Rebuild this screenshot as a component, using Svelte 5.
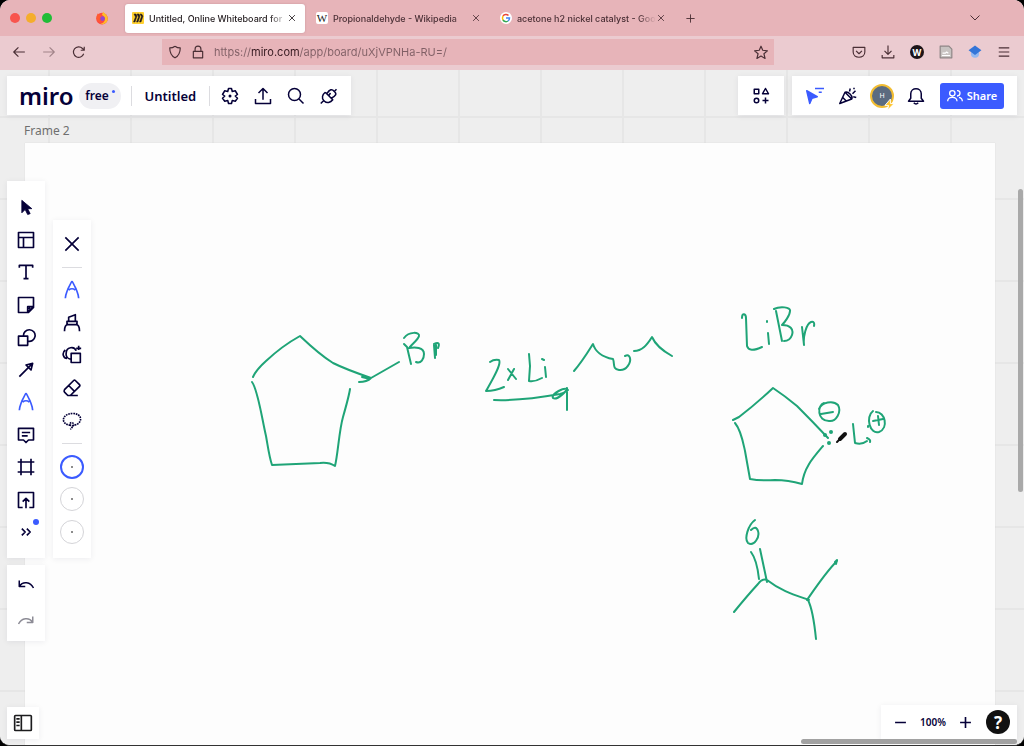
<script lang="ts">
	let activeTool = $state('Pen');
	let activeColor = $state(0);
	let url = $state('https://miro.com/app/board/uXjVPNHa-RU=/');

	const tools = [
		{ name: 'Select', d: 'M7 4v15l4-4 3 6 3-1-3-6h5z', fill: true },
		{ name: 'Templates', d: 'M3 3h18v18H3zM3 9h18M9 9v12' },
		{ name: 'Text', d: 'M4 7V4h16v3M12 4v16M9 20h6' },
		{ name: 'Sticky note', d: 'M3 3h18v12l-6 6H3zM21 14h-7v7zM20 15l-5 5M17 15l-2 2' },
		{ name: 'Shapes', d: 'M3 11h11v11H3zM9 11a7 7 0 1 1 5 6' },
		{ name: 'Connection line', d: 'M4 20 19 5M12 6l8-2-2 8z' },
		{ name: 'Pen', d: 'M4 22c0-4 2-8 3-11l4-8q1-2 2 0l4 8c1 3 3 7 3 11M8 12q4-3 8 0' },
		{ name: 'Comment', d: 'M3 4h18v14h-6l-3 3-3-3H3zM7 9h10M7 13h7' },
		{ name: 'Frame', d: 'M6 2v20M18 2v20M2 6h20M2 18h20' },
		{ name: 'Upload', d: 'M8 21H3V3h18v18h-5M12 22V10M8 14l4-4 4 4' },
		{ name: 'More', d: 'm7 8 4 4-4 4M13 8l4 4-4 4' }
	];

	const penTools = [
		{ name: 'Pen', d: 'M4 22c0-4 2-8 3-11l4-8q1-2 2 0l4 8c1 3 3 7 3 11M8 12q4-3 8 0' },
		{ name: 'Highlighter', d: 'M3 22c0-4 1-8 4-8h10c3 0 4 4 4 8M6 14v-4h12v4M8 10V5l8-3v8' },
		{ name: 'Smart drawing', d: 'M11 10h11v11H11zM10 17a6 6 0 0 1-5-7c0-8 10-9 12-3M4 6c-5 4-2 10 2 10M20 1v5M17 4h6' },
		{ name: 'Eraser', d: 'M3 14 14 3q1-1 2 0l5 5q1 1 0 2L10 21H7l-4-4q-1-1 0-3M8 9l7 7M10 21h9' },
		{ name: 'Lasso', d: 'M10 17c-12-1-11-14 3-14 12 0 12 12 2 14q-3 1-5 0c-2-4 5-4 4 0q-2 3-4 5', dashed: true }
	];

	const strokes = [
		// bromide on the left
		'M253 377q3-7 13-16 16-15 34-25 20 19 33 27 12 6 38 15 M359 382q8 0 12-4l28-16 M362 377l8 2',
		'M252 382c6 8 10 37 14 54 2 11 3 20 6 29l48-2q9-1 15 3c3-12 4-35 8-49q6-21 7-28',
		'M404 344l3 3 4 17 M404 338c5-7 16-6 15-2-1 4-7 8-10 12 6-1 15-1 15 6 0 5-3 10-8 8 M434 345l1 13 M434 344q7-3 4 4 M436 345v10',
		// reagent above the arrow
		'M490 362q4-3 9-2c3 4-8 22-13 31q9 0 18-4 M508 369l8 10 M514 369l-6 11 M529 354l1 12-1 15q6 1 13-3 M542 359l2 1 M545 367l1 10',
		'M494 400c25 1 49-3 66-6q4-1 8-4c-3-4-17 4-15 8 4 3 15-8 14-10v22',
		'M574 371c8-9 14-19 19-27 2 7 9 13 20 15 2 5-1 10 6 11 8 1 12-8 11-12q-1-4-5-2 M634 351c8 0 13-6 18-14 3 7 11 14 20 19',
		// lithium bromide
		'M742 318c0-6 4-4 4 0l1 28q2 7 15 1 M767 322v-1 M768 333l1 11 M776 311l6 30 M774 309c6-3 17-2 16 2 0 4-5 11-8 14 8 0 12 4 10 10q-2 6-8 6 M802 327l2 18c-1-8 2-21 7-23q4-1 3 4',
		// organolithium ring
		'M733 420l6-3q17-13 34-29 12 8 24 18 16 16 31 32 M735 423c6 7 8 19 10 28l5 28q10 2 25 1 13 0 27 4c2-16 10-25 21-38',
		'M819 409c3-7 14-9 19-4 4 7-2 17-9 16-12 0-12-16-5-18 M821 414l12-2',
		'M853 424l2 19q7 2 12-2 M868 427v-1 M867 438q4 2 3 4 M873 411c-8 6-3 24 6 21 10-4 6-20-3-20 M873 421l10-2 M878 416l1 9',
		// ketone
		'M755 520c-7 5-11 19-7 23 6 4 12-6 10-12q-2-6-7-1 M751 552q6 8 8 27 M760 549l7 33 M734 612q13-16 24-28 4-6 9-4c14 11 28 15 42 20 M807 600c9-13 19-28 30-39 M808 600c5 10 7 29 8 39 M835 562l2-2-1 4'
	];
</script>

{#snippet icon(d: string, filled = false, dashed = false)}
	<svg class="icon" class:filled class:dashed viewBox="0 0 24 24" aria-hidden="true"><path {d} /></svg>
{/snippet}

<div class="window">
	<header class="browser">
		<div class="tabs">
			<div class="lights"><i class="red"></i><i class="amber"></i><i class="green"></i></div>
			<svg class="firefox" viewBox="0 0 24 24" aria-hidden="true">
				<circle cx="12" cy="13" r="10" fill="#ff4b3e" />
				<path d="M14 1c1 3 8 5 8 13a10 10 0 0 1-13 8c9-1 11-11 3-15z" fill="#ffbd28" />
				<path d="M3 8 5 4q1 3 4 3l3 3c-5 0-6 7-1 9-7 0-9-5-8-11" fill="#ff5a32" />
				<circle cx="13" cy="13" r="4" fill="#9149cf" />
			</svg>
			<div class="tab active">
				<svg class="favicon" viewBox="0 0 24 24" aria-hidden="true">
					<rect width="24" height="24" rx="2" fill="#ffd02f" />
					<path d="M4 4h4l2 4-4 12H3l4-10zm6 0h4l2 4-4 12H9l4-10zm6 0h3l3 4-4 12h-3l4-11z" fill="#211a1e" stroke="#211a1e" />
				</svg>
				<span>Untitled, Online Whiteboard for</span>
				<button aria-label="Close tab">{@render icon('m5 5 14 14M19 5 5 19')}</button>
			</div>
			<div class="tab">
				<span class="favicon wiki">W</span>
				<span>Propionaldehyde - Wikipedia</span>
				<button aria-label="Close tab">{@render icon('m5 5 14 14M19 5 5 19')}</button>
			</div>
			<div class="tab">
				<svg class="favicon" viewBox="0 0 24 24" aria-hidden="true">
					<circle cx="12" cy="12" r="12" fill="#fff" />
					<g fill="none" stroke-width="3">
						<path d="M6 8a7 7 0 0 1 11-1" stroke="#ea4335" />
						<path d="M6 8a8 8 0 0 0 0 8" stroke="#fbbc05" />
						<path d="M6 16a7 7 0 0 0 10 2" stroke="#34a853" />
						<path d="M16 18q3-2 3-6h-7" stroke="#4285f4" />
					</g>
				</svg>
				<span>acetone h2 nickel catalyst - Goo</span>
				<button aria-label="Close tab">{@render icon('m5 5 14 14M19 5 5 19')}</button>
			</div>
			<button class="new-tab" aria-label="New tab">{@render icon('M12 3v18M3 12h18')}</button>
			<button class="list-tabs" aria-label="List all tabs">{@render icon('m3 7 9 9 9-9')}</button>
		</div>

		<div class="navbar">
			<div class="history">
				<button aria-label="Back">{@render icon('M22 12H3M11 4l-8 8 8 8')}</button>
				<button aria-label="Forward" disabled>{@render icon('M2 12h19M13 4l8 8-8 8')}</button>
				<button aria-label="Reload">{@render icon('M20 15a9 9 0 1 1-2-9l3 3M21 3v6h-6')}</button>
			</div>
			<div class="urlbar">
				{@render icon('M12 2q4 3 9 3c0 8-2 13-9 17C5 18 3 13 3 5q5 0 9-3')}
				{@render icon('M4 11h16v11H4zM7 11V7q0-5 5-5t5 5v4')}
				<div class="address">
					<input aria-label="Address" bind:value={url} />
				</div>
				<button aria-label="Bookmark">{@render icon('m12 2 3 7 8 1-6 5 2 8-7-4-7 4 2-8-6-5 8-1z')}</button>
			</div>
			<div class="extensions">
				<button aria-label="Pocket">{@render icon('M2 4h20v8c0 12-20 12-20 0zM7 10l5 5 5-5')}</button>
				<button aria-label="Downloads">{@render icon('M12 1v15M6 10l6 6 6-6M2 17v5h20v-5')}</button>
				<button class="w-badge" aria-label="Wiki extension">W</button>
				<button aria-label="Page extension">
					<svg class="icon" viewBox="0 0 24 24"><path d="M2 2h15l5 5v15H2z" fill="#c8c3c1" stroke="#8d8585" /><path d="M5 18h14M6 14h5l2-2 3 2" stroke="#fff" /></svg>
				</button>
				<button aria-label="Scholar extension">
					<svg class="icon" viewBox="0 0 24 24"><circle cx="12" cy="15" r="7" fill="#94b9f1" stroke="none" /><path d="m1 9 11-8 11 8-11 8z" fill="#3475d8" stroke="none" /></svg>
				</button>
				<button aria-label="Application menu">{@render icon('M3 5h18M3 12h18M3 19h18')}</button>
			</div>
		</div>
	</header>

	<main class="board">
		<span class="frame-label">Frame 2</span>
		<div class="frame">
			<svg class="ink" viewBox="25 143 970 602" aria-label="Reaction sketch">
				{#each strokes as d}
					<path {d} />
				{/each}
				<g class="dots"><circle cx="831" cy="432" r="2" /><circle cx="829" cy="443" r="2" /><circle cx="825" cy="435" r="2" /></g>
				<path class="nib" d="m840 439 5-5" />
				<path class="nib tip" d="m837 442 4-4" />
			</svg>
		</div>
		<div class="scroll-y"></div>
		<div class="scroll-x"></div>

		<div class="overlay">
			<div class="topbar">
				<div class="panel title-panel">
					<a class="logo" href="#boards">miro</a>
					<button class="plan">free<i></i></button>
					<hr />
					<button class="title">Untitled</button>
					<hr />
					<div class="board-actions">
						<button aria-label="Settings">
							<svg class="icon" viewBox="0 0 24 24"><path d="m10 2-1 4-4-1-3 5 3 2-3 3 3 4 4-1 1 4h4l1-4 4 1 3-4-3-3 3-2-3-5-4 1-1-4z" /><circle cx="12" cy="12" r="1" /></svg>
						</button>
						<button aria-label="Export">{@render icon('M12 17V3M6 8l6-6 6 6M2 16v6h20v-6')}</button>
						<button aria-label="Search">{@render icon('M18 10a8 8 0 1 1-16 0 8 8 0 0 1 16 0M16 16l6 6')}</button>
						<button aria-label="Apps">{@render icon('m7 7 10 10c-3 4-8 5-11 2l-1-1C2 15 3 10 7 7M5 18l-4 4M9 9c4-6 7-7 10-3M15 15c6-3 8-6 4-9M12 11l2-3M19 6l3-3')}</button>
					</div>
				</div>
				<div class="panel apps-panel">
					<button aria-label="Widgets">{@render icon('M3 3h6v6H3zM18 2l4 7h-8zM6 15a3 3 0 1 1 0 6 3 3 0 0 1 0-6M18 14v8M14 18h8')}</button>
				</div>
				<div class="panel people-panel">
					<button class="blue" aria-label="Hide cursors">
						<svg class="icon" viewBox="0 0 24 24"><path d="m1 5 14 8-7 2-3 7z" fill="currentColor" /><path d="M12 2h12M17 7h4" /></svg>
					</button>
					<button aria-label="Reactions">{@render icon('m8 7 9 9-16 6zM8 7c4-2 11 5 9 9M5 14l5 5M14 6l1-4M18 9l4-4M19 13l4 1M20 1v2')}</button>
					<button class="avatar" aria-label="Account">
						<span>H</span>
						<svg viewBox="0 0 12 12"><path d="M7 0 1 7h4L4 12l7-7H7z" /></svg>
					</button>
					<button aria-label="Notifications">{@render icon('M2 19h20l-3-4V9C19 0 5 0 5 9v6zM9 21q3 3 6 0')}</button>
					<button class="share">
						{@render icon('M12 8a4 4 0 1 1-8 0 4 4 0 0 1 8 0M1 20c0-8 14-8 14 0M15 4c6-1 6 8 0 8M18 14q5 1 5 6')}
						Share
					</button>
				</div>
			</div>

			<div class="rails">
				<div class="rail-column">
					<div class="panel rail tools">
						{#each tools as tool}
							<button
								class:blue={activeTool === tool.name}
								class:more={tool.name === 'More'}
								aria-label={tool.name}
								onclick={() => (activeTool = tool.name)}
							>
								{@render icon(tool.d, tool.fill)}
							</button>
						{/each}
					</div>
					<div class="panel rail undo">
						<button aria-label="Undo">{@render icon('M3 6v8h8M3 14c5-8 15-6 19 2')}</button>
						<button aria-label="Redo" disabled>{@render icon('M21 6v8h-8M21 14c-5-8-15-6-19 2')}</button>
					</div>
				</div>
				<div class="panel rail pens">
					<button aria-label="Close">{@render icon('m4 4 16 16M20 4 4 20')}</button>
					<hr />
					{#each penTools as tool}
						<button class:blue={tool.name === 'Pen'} aria-label={tool.name}>
							{@render icon(tool.d, false, tool.dashed)}
						</button>
					{/each}
					<hr />
					{#each [0, 1, 2] as n}
						<button
							class="swatch"
							class:chosen={activeColor === n}
							aria-label={`Pen colour ${n + 1}`}
							onclick={() => (activeColor = n)}
						></button>
					{/each}
				</div>
			</div>

			<div class="bottombar">
				<button class="panel frames" aria-label="Frames">
					<svg class="icon" viewBox="0 0 24 24"><rect x="2" y="3" width="20" height="18" rx="1" /><path d="M10 3v18M4 7h4M4 11h4M4 15h4" /></svg>
				</button>
				<div class="panel zoom">
					<button aria-label="Zoom out">{@render icon('M2 12h20')}</button>
					<button class="level">100%</button>
					<button aria-label="Zoom in">{@render icon('M2 12h20M12 2v20')}</button>
					<button class="help" aria-label="Help">?</button>
				</div>
			</div>
		</div>
	</main>
</div>

<style>
	:global(body) {
		margin: 0;
		background: #000;
	}

	.window {
		display: flex;
		flex-direction: column;
		box-sizing: border-box;
		height: 100vh;
		min-height: 700px;
		border-bottom: 1px solid #333;
		border-radius: 10px;
		overflow: hidden;
		background: #ededed;
		color: #050038;
		font-family: 'Noto Sans', 'Open Sans', sans-serif;
	}

	button {
		display: flex;
		align-items: center;
		justify-content: center;
		flex: none;
		padding: 0;
		border: 0;
		background: none;
		color: inherit;
		font: inherit;
		cursor: pointer;
	}

	hr {
		flex: none;
		margin: 0;
		border: 0;
		background: #dcdce0;
	}

	.icon {
		display: block;
		flex: none;
		width: 20px;
		height: 20px;
		fill: none;
		stroke: currentColor;
		stroke-width: 2;
		stroke-linejoin: round;
	}

	.icon.filled {
		fill: currentColor;
		stroke-width: 1;
	}

	.icon.dashed {
		stroke-dasharray: 2 1;
	}

	.blue {
		color: #3b5bff;
	}

	/* browser chrome */
	.browser {
		flex: none;
		font-family: Inter, sans-serif;
		color: #4a2f35;
	}

	.browser .icon {
		width: 14px;
		height: 14px;
	}

	.tabs {
		display: flex;
		align-items: center;
		height: 36px;
		background: #e7b4b9;
	}

	.lights {
		display: flex;
		gap: 6px;
		margin-left: 10px;
	}

	.lights i {
		width: 10px;
		height: 10px;
		border-radius: 50%;
	}

	.red {
		background: #f8544d;
	}

	.amber {
		background: #f5ad2c;
	}

	.green {
		background: #20bd37;
	}

	.firefox {
		width: 14px;
		height: 14px;
		margin: 0 16px 0 43px;
	}

	.tab {
		display: flex;
		align-items: center;
		box-sizing: border-box;
		width: 180px;
		height: 29px;
		margin-right: 4px;
		padding: 0 8px 0 7px;
		border-radius: 3px;
		font-size: 9px;
		font-weight: 500;
		white-space: nowrap;
	}

	.tab.active {
		background: #fff;
		box-shadow: 0 0 2px #a0707880;
		color: #221b1e;
	}

	.tab span:not(.favicon) {
		flex: 1;
		mask-image: linear-gradient(to left, transparent, #000 18px);
	}

	.tab .icon {
		width: 10px;
		height: 10px;
	}

	.favicon {
		flex: none;
		width: 12px;
		height: 12px;
		margin-right: 5px;
	}

	.wiki {
		border-radius: 2px;
		background: #fff;
		color: #222;
		font: 11px/12px 'Liberation Serif', serif;
		text-align: center;
	}

	.new-tab {
		margin-left: 8px;
	}

	.new-tab .icon {
		width: 11px;
		height: 11px;
	}

	.list-tabs {
		margin: 0 43px 0 auto;
	}

	.list-tabs .icon {
		width: 12px;
		height: 12px;
	}

	.navbar {
		display: flex;
		align-items: center;
		box-sizing: border-box;
		height: 34px;
		padding-bottom: 2px;
		background: #ebcbd0;
	}

	.history {
		display: flex;
		flex: none;
		gap: 16px;
		width: 150px;
		padding-left: 12px;
	}

	.history button:disabled {
		opacity: 0.45;
	}

	.urlbar {
		display: flex;
		align-items: center;
		flex: 1;
		gap: 9px;
		height: 26px;
		padding: 0 6px;
		background: #e7b4b9;
	}

	.address {
		flex: 1;
	}

	.address input {
		display: block;
		box-sizing: border-box;
		width: 100%;
		height: 16px;
		padding: 0;
		border: 0;
		outline: 0;
		/* the host part of the address is darker than the rest */
		background: linear-gradient(to right, #805f65 37px, #35191f 37px 86px, #805f65 86px);
		background-clip: text;
		color: transparent;
		caret-color: #35191f;
		font: 11px Inter, sans-serif;
	}

	.extensions {
		display: flex;
		align-items: center;
		flex: none;
		gap: 15px;
		padding: 0 13px 0 78px;
	}

	.extensions .icon {
		width: 14px;
		height: 14px;
	}

	.w-badge {
		width: 14px;
		height: 14px;
		border-radius: 50%;
		background: #1c1418;
		color: #fff;
		font-size: 9px;
		font-weight: 700;
	}

	/* board */
	.board {
		position: relative;
		flex: 1;
		background-color: #eeeeee;
		background-image: linear-gradient(to right, #e6e6e6 2px, transparent 2px),
			linear-gradient(#e6e6e6 2px, transparent 2px);
		background-size: 82px 82px;
		background-position: 48px 46px;
	}

	.frame-label {
		position: absolute;
		top: 53px;
		left: 24px;
		color: #6f6f6f;
		font-size: 12px;
		line-height: 16px;
	}

	.frame {
		position: absolute;
		inset: 73px 29px 0 25px;
		background: #fdfdfd;
		box-shadow: 0 0 1px #ccc;
	}

	.ink {
		display: block;
		width: 970px;
		height: 602px;
		fill: none;
		stroke: #1fa477;
		stroke-width: 2;
		stroke-linecap: round;
		stroke-linejoin: round;
	}

	.dots {
		fill: #1fa477;
		stroke: none;
	}

	.nib {
		stroke: #111;
		stroke-width: 4;
	}

	.tip {
		stroke-width: 2;
	}

	.scroll-y {
		position: absolute;
		top: 119px;
		right: 1px;
		width: 5px;
		height: 303px;
		border-radius: 3px;
		background: #a9a9a9;
	}

	.scroll-x {
		position: absolute;
		right: 7px;
		bottom: 1px;
		z-index: 1;
		width: 216px;
		height: 5px;
		border-radius: 3px;
		background: #a2a2a2;
	}

	.overlay {
		position: absolute;
		inset: 0;
		display: flex;
		flex-direction: column;
		padding: 6px 7px;
	}

	.panel {
		display: flex;
		align-items: center;
		box-sizing: border-box;
		background: #fff;
		box-shadow: 0 1px 6px #05003812;
	}

	.topbar {
		display: flex;
		gap: 8px;
		height: 39px;
	}

	.topbar .icon {
		width: 18px;
		height: 18px;
	}

	.title-panel {
		margin-right: auto;
		padding: 0 13px 0 12px;
	}

	.title-panel hr {
		width: 1px;
		height: 20px;
	}

	.logo {
		color: inherit;
		font-size: 24px;
		font-weight: 600;
		line-height: 36px;
		text-decoration: none;
	}

	.plan {
		position: relative;
		width: 42px;
		height: 26px;
		margin: 0 10px 0 5px;
		border-radius: 13px;
		background: #f0f0f3;
		font-size: 12px;
		font-weight: 600;
		padding-right: 5px;
	}

	.plan i {
		position: absolute;
		top: 7px;
		right: 6px;
		width: 3px;
		height: 3px;
		border-radius: 50%;
		background: #3b5bff;
	}

	.title {
		margin: 0 13px;
		font-size: 13px;
		font-weight: 600;
	}

	.board-actions {
		display: flex;
		gap: 15px;
		margin-left: 11px;
	}

	.apps-panel {
		padding: 0 14px;
	}

	.people-panel {
		gap: 15px;
		padding: 0 13px 0 14px;
	}

	.avatar {
		position: relative;
		width: 24px;
		height: 24px;
		margin: 0 -2px;
		border: 2px solid #f2bd32;
		border-radius: 50%;
		background: #5b6b80;
		color: #fff;
		font-size: 7px;
	}

	.avatar svg {
		position: absolute;
		right: -3px;
		bottom: -4px;
		width: 11px;
		height: 11px;
		fill: #ffc52e;
		stroke: #fff;
	}

	.share {
		gap: 4px;
		width: 64px;
		height: 26px;
		border-radius: 3px;
		background: #3b5bff;
		color: #fff;
		font-size: 11px;
		font-weight: 600;
	}

	.share .icon {
		width: 16px;
		height: 16px;
	}

	.rails {
		display: flex;
		align-items: flex-start;
		flex: 1;
		gap: 8px;
		padding-top: 66px;
	}

	.rail-column {
		display: flex;
		flex-direction: column;
		gap: 7px;
	}

	.rail {
		flex-direction: column;
		justify-content: space-between;
		width: 38px;
	}

	.rail button {
		width: 24px;
		height: 24px;
	}

	.tools {
		height: 377px;
		padding: 14px 0;
	}

	.more {
		position: relative;
	}

	.more::after {
		content: '';
		position: absolute;
		top: -1px;
		right: -1px;
		width: 6px;
		height: 6px;
		border-radius: 50%;
		background: #3b5bff;
	}

	.undo {
		height: 76px;
		padding: 8px 0;
	}

	.undo .icon {
		width: 18px;
		height: 18px;
	}

	.undo button:disabled {
		color: #8d8c96;
	}

	.pens {
		height: 338px;
		margin-top: 39px;
		padding: 12px 0 14px;
	}

	.pens hr {
		width: 20px;
		height: 1px;
		margin: 2px 0;
	}

	.rail .swatch {
		box-sizing: border-box;
		border: 1px solid #d4d4d8;
		border-radius: 50%;
	}

	.rail .swatch::after {
		content: '';
		width: 2px;
		height: 2px;
		border-radius: 50%;
		background: #666;
	}

	.rail .swatch.chosen {
		border: 2px solid #3b5bff;
	}

	.bottombar {
		display: flex;
		align-items: flex-end;
		justify-content: space-between;
	}

	.frames {
		width: 32px;
		height: 32px;
		color: #1c1c1e;
	}

	.zoom {
		gap: 13px;
		height: 34px;
		padding: 0 7px 0 13px;
	}

	.zoom .icon {
		width: 13px;
		height: 13px;
		stroke-width: 3;
	}

	.level {
		font-size: 10px;
		font-weight: 600;
	}

	.help {
		width: 24px;
		height: 24px;
		margin-left: 1px;
		border-radius: 50%;
		background: #111;
		color: #fff;
		font-size: 17px;
		font-weight: 700;
	}
</style>
